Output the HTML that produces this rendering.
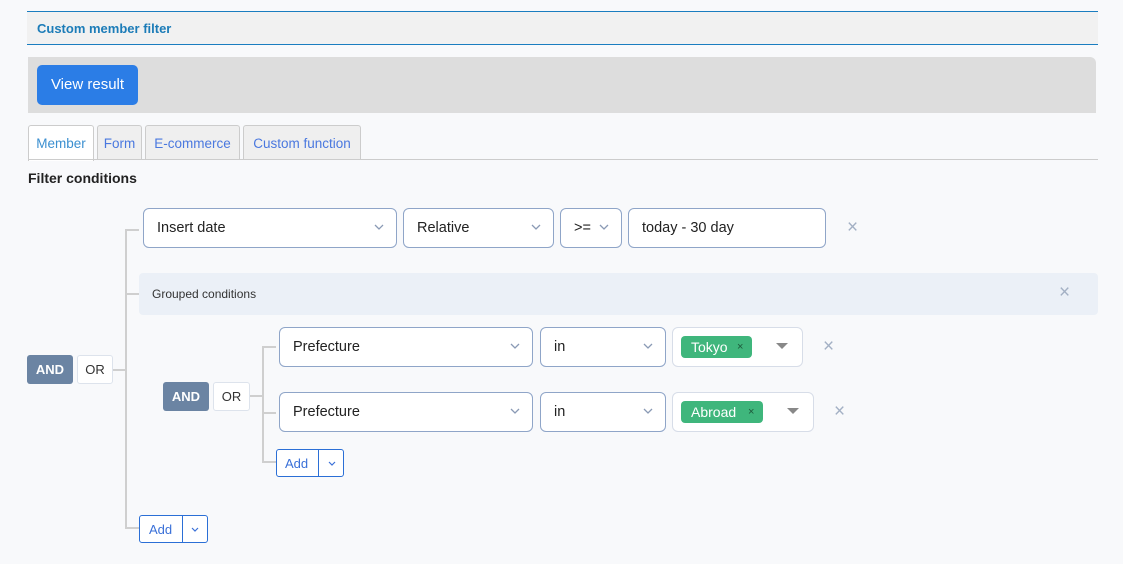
<!DOCTYPE html>
<html><head><meta charset="utf-8"><style>
*{box-sizing:border-box;margin:0;padding:0}
body{width:1123px;height:564px;background:#f8f9fb;font-family:"Liberation Sans",sans-serif;position:relative;overflow:hidden;color:#222}
.a{position:absolute}
.hdr{left:27px;top:11px;width:1071px;height:34px;background:#f1f1f1;border-top:1px solid #1a7dc0;border-bottom:1px solid #1a7dc0;color:#1c7cb8;font-weight:bold;font-size:13px;padding:9px 0 0 10px}
.bar{left:28px;top:57px;width:1068px;height:56px;background:#dddddd;border-radius:0 6px 0 0}
.btn{left:37px;top:65px;width:101px;height:40px;background:#2b7de6;border-radius:5px;color:#fff;font-size:15px;text-align:center;line-height:40px}
.tab{top:125px;height:35px;border:1px solid #ccc;border-bottom:none;background:#efefef;color:#4a78df;font-size:13.5px;text-align:center;line-height:36px;border-radius:3px 3px 0 0}
.line{left:28px;top:159px;width:1070px;height:1px;background:#ccc}
.sel{height:40px;border:1px solid #8fa5c8;border-radius:6px;background:#fff;font-size:14.5px;color:#222;padding-left:13px;line-height:38px}
.sel svg{position:absolute;right:12px;top:15px}
.x{color:#a3b0c4;font-size:19px;line-height:17px}
.vl{background:#cfcfcf;width:2px}
.hl{background:#cfcfcf;height:2px}
.and{background:#6b84a3;color:#fff;font-weight:bold;font-size:13px;text-align:center;border-radius:3px}
.or{background:#fff;border:1px solid #dde3ec;color:#333;font-size:13px;text-align:center;border-radius:3px}
.add{height:28px;border:1px solid #2b6fd6;border-radius:3px;background:#fff;color:#3a70d8;font-size:13px}
.tag{background:#3fb67c;color:#fff;font-size:14px;border-radius:4px;height:22px;line-height:22px;padding-left:10px}
.tb{height:40px;border:1px solid #d7dde8;border-radius:6px;background:#fff}
</style></head><body>
<div class="a hdr">Custom member filter</div>
<div class="a bar"></div>
<div class="a btn">View result</div>
<div class="a tab" style="left:28px;width:66px;background:#fff;color:#3b8fd0;height:36px">Member</div>
<div class="a tab" style="left:97px;width:45px">Form</div>
<div class="a tab" style="left:145px;width:95px">E-commerce</div>
<div class="a tab" style="left:243px;width:118px">Custom function</div>
<div class="a line"></div>
<div class="a" style="left:28px;top:170px;font-size:14px;font-weight:bold;color:#222">Filter conditions</div>

<div class="a vl" style="left:125px;top:229px;height:300px"></div>
<div class="a hl" style="left:125px;top:229px;width:14px"></div>
<div class="a hl" style="left:125px;top:293px;width:14px"></div>
<div class="a hl" style="left:112px;top:369px;width:14px"></div>
<div class="a hl" style="left:125px;top:527px;width:14px"></div>

<div class="a sel" style="left:143px;top:208px;width:254px">Insert date<svg width="10" height="6"><path d="M1 1l4 4 4-4" stroke="#8a9ab5" fill="none" stroke-width="1.3"/></svg></div>
<div class="a sel" style="left:403px;top:208px;width:151px">Relative<svg width="10" height="6"><path d="M1 1l4 4 4-4" stroke="#8a9ab5" fill="none" stroke-width="1.3"/></svg></div>
<div class="a sel" style="left:560px;top:208px;width:62px">&gt;=<svg width="10" height="6"><path d="M1 1l4 4 4-4" stroke="#8a9ab5" fill="none" stroke-width="1.3"/></svg></div>
<div class="a sel" style="left:628px;top:208px;width:198px">today - 30 day</div>
<div class="a x" style="left:847px;top:219px">×</div>

<div class="a" style="left:139px;top:273px;width:959px;height:42px;background:#ebf0f7;border-radius:4px;font-size:12px;color:#333;padding:14px 0 0 13px">Grouped conditions</div>
<div class="a x" style="left:1059px;top:284px">×</div>

<div class="a and" style="left:27px;top:355px;width:46px;height:29px;line-height:29px">AND</div>
<div class="a or" style="left:77px;top:355px;width:36px;height:29px;line-height:27px">OR</div>

<div class="a vl" style="left:262px;top:346px;height:116px"></div>
<div class="a hl" style="left:262px;top:346px;width:14px"></div>
<div class="a hl" style="left:262px;top:412px;width:14px"></div>
<div class="a hl" style="left:249px;top:395px;width:14px"></div>
<div class="a hl" style="left:262px;top:461px;width:14px"></div>

<div class="a and" style="left:163px;top:382px;width:46px;height:29px;line-height:29px">AND</div>
<div class="a or" style="left:213px;top:382px;width:37px;height:29px;line-height:27px">OR</div>

<div class="a sel" style="left:279px;top:327px;width:254px">Prefecture<svg width="10" height="6"><path d="M1 1l4 4 4-4" stroke="#8a9ab5" fill="none" stroke-width="1.3"/></svg></div>
<div class="a sel" style="left:540px;top:327px;width:126px">in<svg width="10" height="6"><path d="M1 1l4 4 4-4" stroke="#8a9ab5" fill="none" stroke-width="1.3"/></svg></div>
<div class="a tb" style="left:672px;top:327px;width:131px"></div>
<div class="a tag" style="left:681px;top:336px;width:71px">Tokyo<span style="position:absolute;left:56px;font-size:11px;color:#1d5a3b">×</span></div>
<svg class="a" style="left:776px;top:343px" width="12" height="6"><path d="M0 0h12l-6 6z" fill="#888"/></svg>
<div class="a x" style="left:823px;top:338px">×</div>

<div class="a sel" style="left:279px;top:392px;width:254px">Prefecture<svg width="10" height="6"><path d="M1 1l4 4 4-4" stroke="#8a9ab5" fill="none" stroke-width="1.3"/></svg></div>
<div class="a sel" style="left:540px;top:392px;width:126px">in<svg width="10" height="6"><path d="M1 1l4 4 4-4" stroke="#8a9ab5" fill="none" stroke-width="1.3"/></svg></div>
<div class="a tb" style="left:672px;top:392px;width:142px"></div>
<div class="a tag" style="left:681px;top:401px;width:82px">Abroad<span style="position:absolute;left:67px;font-size:11px;color:#1d5a3b">×</span></div>
<svg class="a" style="left:787px;top:408px" width="12" height="6"><path d="M0 0h12l-6 6z" fill="#888"/></svg>
<div class="a x" style="left:834px;top:403px">×</div>

<div class="a add" style="left:276px;top:449px;width:68px"><span class="a" style="left:8px;top:6px">Add</span><div class="a" style="left:41px;top:0;width:1px;height:26px;background:#2b6fd6"></div><svg class="a" style="left:51px;top:11px" width="8" height="5"><path d="M1 1l3 3 3-3" stroke="#3a70d8" fill="none" stroke-width="1.2"/></svg></div>
<div class="a add" style="left:139px;top:515px;width:69px"><span class="a" style="left:9px;top:6px">Add</span><div class="a" style="left:42px;top:0;width:1px;height:26px;background:#2b6fd6"></div><svg class="a" style="left:51px;top:11px" width="8" height="5"><path d="M1 1l3 3 3-3" stroke="#3a70d8" fill="none" stroke-width="1.2"/></svg></div>
</body></html>
